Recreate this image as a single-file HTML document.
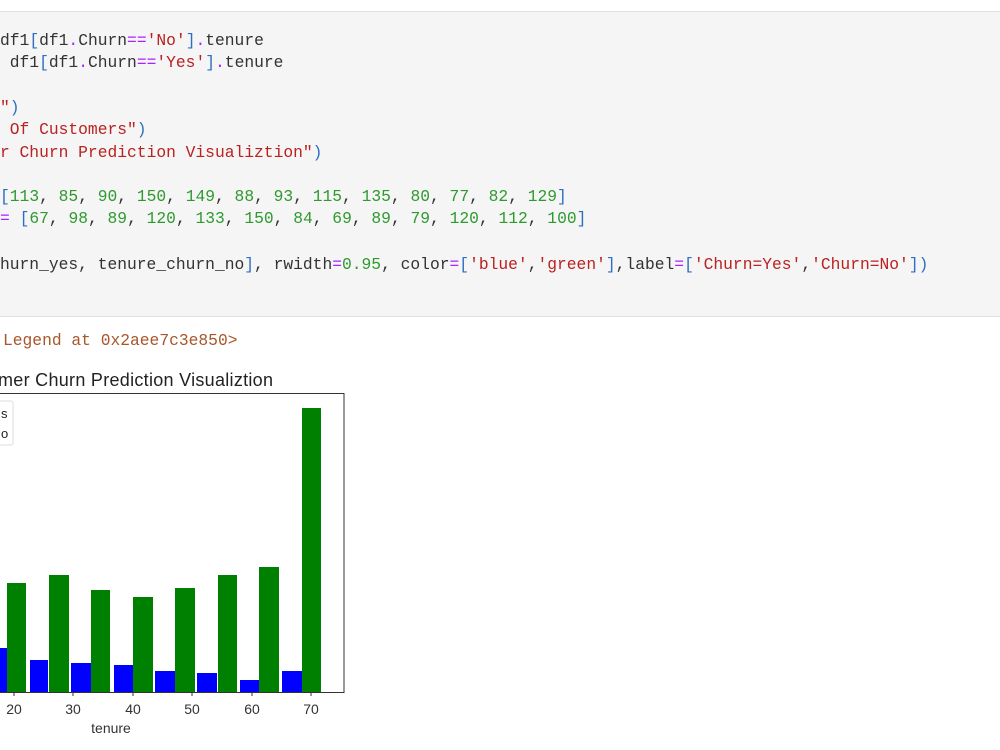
<!DOCTYPE html>
<html><head><meta charset="utf-8"><style>
html,body{margin:0;padding:0;width:1000px;height:750px;overflow:hidden;background:#fff;}
.cell{position:absolute;left:-2px;top:11px;width:1010px;height:304px;background:#f5f5f5;border-top:1px solid #e0e0e0;border-bottom:1px solid #e0e0e0;}
.l{position:absolute;left:0;font-family:"Liberation Mono",monospace;font-size:16.3px;white-space:pre;color:#333;line-height:20px;}
.s{color:#ba2121}.n{color:#2e9a2e}.o{color:#aa22ff}.b{color:#2e6fc0}
.out{color:#a8562a}
</style></head><body>
<div class="cell"></div>
<div class="l" style="top:31px">df1<span class="b">[</span>df1<span class="o">.</span>Churn<span class="o">==</span><span class="s">'No'</span><span class="b">]</span><span class="o">.</span>tenure</div>
<div class="l" style="top:53px"> df1<span class="b">[</span>df1<span class="o">.</span>Churn<span class="o">==</span><span class="s">'Yes'</span><span class="b">]</span><span class="o">.</span>tenure</div>
<div class="l" style="top:98px"><span class="s">"</span><span class="b">)</span></div>
<div class="l" style="top:120px"><span class="s"> Of Customers"</span><span class="b">)</span></div>
<div class="l" style="top:143px"><span class="s">r Churn Prediction Visualiztion"</span><span class="b">)</span></div>
<div class="l" style="top:187px"><span class="b">[</span><span class="n">113</span>, <span class="n">85</span>, <span class="n">90</span>, <span class="n">150</span>, <span class="n">149</span>, <span class="n">88</span>, <span class="n">93</span>, <span class="n">115</span>, <span class="n">135</span>, <span class="n">80</span>, <span class="n">77</span>, <span class="n">82</span>, <span class="n">129</span><span class="b">]</span></div>
<div class="l" style="top:209px"><span class="o">=</span> <span class="b">[</span><span class="n">67</span>, <span class="n">98</span>, <span class="n">89</span>, <span class="n">120</span>, <span class="n">133</span>, <span class="n">150</span>, <span class="n">84</span>, <span class="n">69</span>, <span class="n">89</span>, <span class="n">79</span>, <span class="n">120</span>, <span class="n">112</span>, <span class="n">100</span><span class="b">]</span></div>
<div class="l" style="top:255px">hurn_yes, tenure_churn_no<span class="b">]</span>, rwidth<span class="o">=</span><span class="n">0.95</span>, color<span class="o">=</span><span class="b">[</span><span class="s">'blue'</span>,<span class="s">'green'</span><span class="b">]</span>,label<span class="o">=</span><span class="b">[</span><span class="s">'Churn=Yes'</span>,<span class="s">'Churn=No'</span><span class="b">])</span></div>
<div class="l out" style="top:331px;left:3px">Legend at 0x2aee7c3e850&gt;</div>
<svg style="position:absolute;left:0;top:0" width="1000" height="750" font-family="Liberation Sans, DejaVu Sans, sans-serif">
<text x="-2" y="386" font-size="18" fill="#222" textLength="275">mer Churn Prediction Visualiztion</text>
<g fill="#008000">
<rect x="7" y="583" width="19" height="109"/><rect x="49" y="575" width="20" height="117"/>
<rect x="91" y="590" width="19" height="102"/><rect x="133" y="597" width="20" height="95"/>
<rect x="175" y="588" width="20" height="104"/><rect x="218" y="575" width="19" height="117"/>
<rect x="259" y="567" width="20" height="125"/><rect x="302" y="408" width="19" height="284"/>
</g>
<g fill="#0000ff">
<rect x="0" y="648" width="7" height="44"/><rect x="30" y="660" width="18" height="32"/>
<rect x="71" y="663" width="20" height="29"/><rect x="114" y="665" width="19" height="27"/>
<rect x="155" y="671" width="20" height="21"/><rect x="197" y="673" width="20" height="19"/>
<rect x="240" y="680" width="19" height="12"/><rect x="282" y="671" width="20" height="21"/>
</g>
<rect x="-5" y="393.5" width="349" height="299" fill="none" stroke="#333" stroke-width="1"/>
<rect x="-5" y="401" width="18" height="44" rx="2" fill="#fff" fill-opacity="0.8" stroke="#ddd"/>
<text x="1" y="418" font-size="13" fill="#222">s</text>
<text x="1" y="438" font-size="13" fill="#222">o</text>
<g stroke="#333"><line x1="14" y1="692" x2="14" y2="696"/><line x1="73" y1="692" x2="73" y2="696"/><line x1="133" y1="692" x2="133" y2="696"/><line x1="192" y1="692" x2="192" y2="696"/><line x1="252" y1="692" x2="252" y2="696"/><line x1="311" y1="692" x2="311" y2="696"/></g>
<g font-size="14" fill="#333" text-anchor="middle">
<text x="14" y="714">20</text><text x="73" y="714">30</text><text x="133" y="714">40</text><text x="192" y="714">50</text><text x="252" y="714">60</text><text x="311" y="714">70</text>
<text x="111" y="733">tenure</text>
</g>
</svg>
</body></html>
